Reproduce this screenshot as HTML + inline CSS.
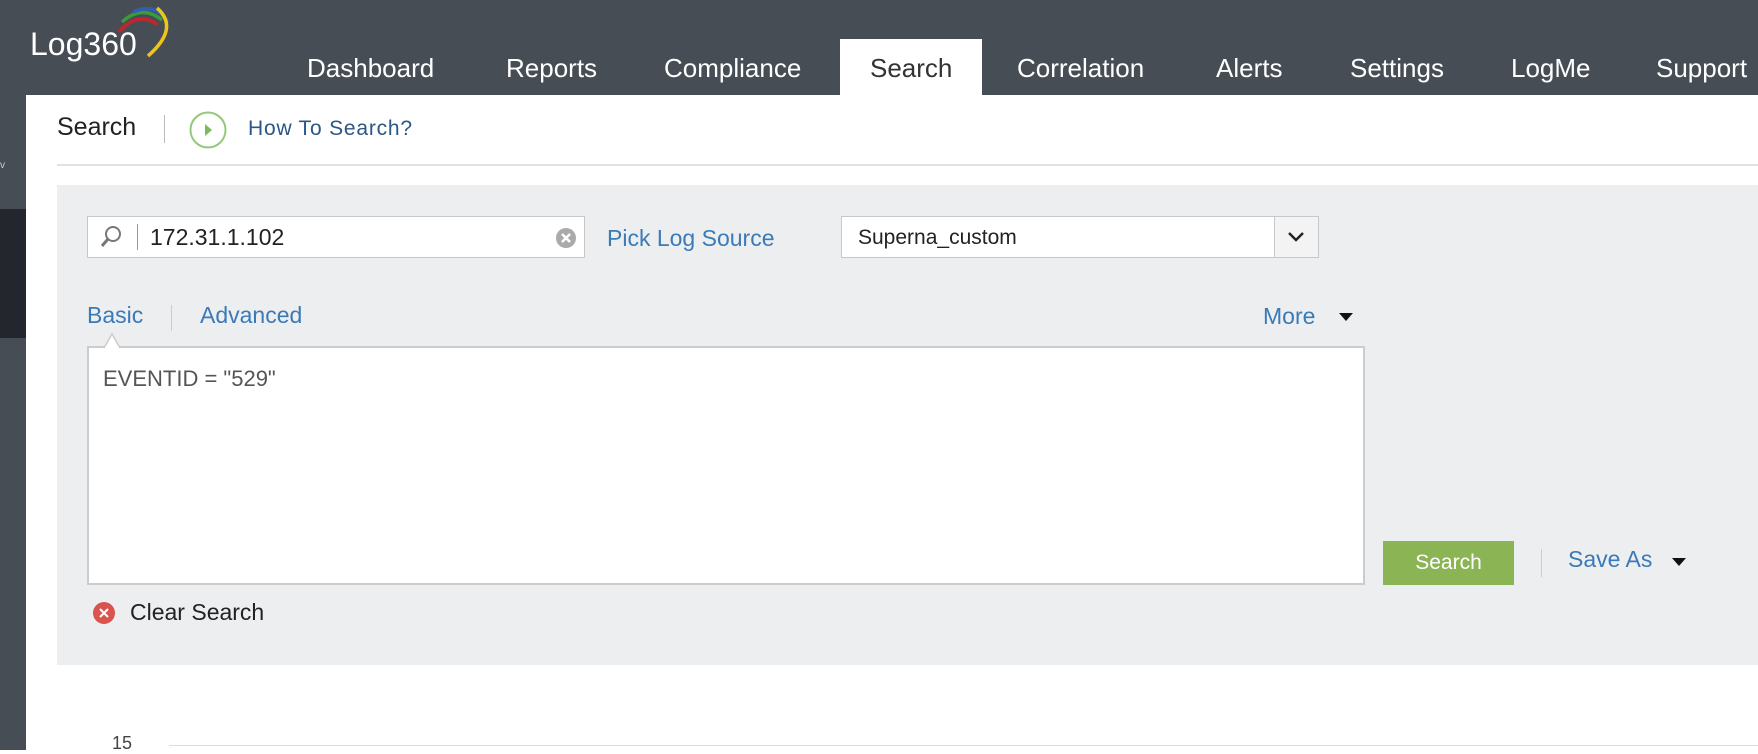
<!DOCTYPE html>
<html><head><meta charset="utf-8"><style>
*{margin:0;padding:0;box-sizing:border-box}
body{width:1758px;height:750px;overflow:hidden;background:#fff;font-family:"Liberation Sans",sans-serif;position:relative}
.a{position:absolute}
.nav{left:0;top:0;width:1758px;height:95px;background:#464d55}
.side{left:0;top:95px;width:26px;height:655px;background:#464d55}
.ni{color:#fff;font-size:26px;top:53px}
.blue{color:#3a7ab7}
</style></head><body>
<div class="a nav"></div>
<div class="a side"></div>
<div class="a" style="left:0;top:209px;width:26px;height:129px;background:#23272d"></div>
<div class="a" style="left:0;top:160px;width:6px;height:10px;color:#ccc;font-size:10px">v</div>
<div class="a" style="left:30px;top:26px;color:#fff;font-size:32px">Log360</div>
<svg class="a" style="left:0;top:0" width="200" height="70" viewBox="0 0 200 70">
<path d="M119 32 Q138 10 158 25" stroke="#c0262d" stroke-width="3.5" fill="none"/>
<path d="M122 22 Q142 4 162 20" stroke="#3b9a3a" stroke-width="3.5" fill="none"/>
<path d="M133 12 Q155 2 168 22" stroke="#2f5fb0" stroke-width="3.5" fill="none"/>
<path d="M157 8 Q180 28 148 56" stroke="#f0c419" stroke-width="3.5" fill="none"/>
</svg>
<div class="a" style="left:840px;top:39px;width:142px;height:56px;background:#fff"></div>
<div class="a ni" style="left:307px">Dashboard</div>
<div class="a ni" style="left:506px">Reports</div>
<div class="a ni" style="left:664px">Compliance</div>
<div class="a ni" style="left:870px;color:#333">Search</div>
<div class="a ni" style="left:1017px">Correlation</div>
<div class="a ni" style="left:1216px">Alerts</div>
<div class="a ni" style="left:1350px">Settings</div>
<div class="a ni" style="left:1511px">LogMe</div>
<div class="a ni" style="left:1656px">Support</div>

<div class="a" style="left:57px;top:113px;font-size:25px;color:#222">Search</div>
<div class="a" style="left:164px;top:115px;width:1px;height:28px;background:#bbb"></div>
<svg class="a" style="left:188px;top:110px" width="40" height="40"><circle cx="20" cy="20" r="17.5" fill="none" stroke="#93c97a" stroke-width="2"/><path d="M17 14 L24 20 L17 26Z" fill="#7cbb5c"/></svg>
<div class="a" style="left:248px;top:117px;font-size:21px;letter-spacing:0.8px;color:#2a5785">How To Search?</div>
<div class="a" style="left:57px;top:164px;width:1701px;height:2px;background:#e2e2e2"></div>

<div class="a" style="left:57px;top:185px;width:1701px;height:480px;background:#edeef0"></div>
<div class="a" style="left:87px;top:216px;width:498px;height:42px;background:#fff;border:1px solid #c8c8c8"></div>
<svg class="a" style="left:98px;top:224px" width="26" height="26"><circle cx="15" cy="10" r="7" fill="none" stroke="#777" stroke-width="2"/><path d="M10 15 L4 22" stroke="#777" stroke-width="3"/></svg>
<div class="a" style="left:137px;top:224px;width:1px;height:26px;background:#999"></div>
<div class="a" style="left:150px;top:224px;font-size:23px;color:#222">172.31.1.102</div>
<svg class="a" style="left:555px;top:227px" width="22" height="22"><circle cx="11" cy="11" r="10" fill="#aaa"/><path d="M7 7 L15 15 M15 7 L7 15" stroke="#fff" stroke-width="2.5"/></svg>
<div class="a blue" style="left:607px;top:225px;font-size:23px">Pick Log Source</div>
<div class="a" style="left:841px;top:216px;width:478px;height:42px;background:#fff;border:1px solid #c8c8c8"></div>
<div class="a" style="left:1274px;top:217px;width:44px;height:40px;background:#f3f3f3;border-left:1px solid #c8c8c8"></div>
<svg class="a" style="left:1285px;top:228px" width="22" height="18"><path d="M4 5 L11 12 L18 5" stroke="#222" stroke-width="2.5" fill="none"/></svg>
<div class="a" style="left:858px;top:226px;font-size:21px;color:#222">Superna_custom</div>

<div class="a blue" style="left:87px;top:302px;font-size:23px">Basic</div>
<div class="a" style="left:171px;top:305px;width:1px;height:26px;background:#ccc"></div>
<div class="a blue" style="left:200px;top:302px;font-size:23px">Advanced</div>
<div class="a blue" style="left:1263px;top:303px;font-size:23px">More</div>
<svg class="a" style="left:1338px;top:312px" width="16" height="10"><path d="M1 1 L15 1 L8 9Z" fill="#111"/></svg>
<div class="a" style="left:87px;top:346px;width:1278px;height:239px;background:#fff;border:2px solid #ccc"></div>
<svg class="a" style="left:104px;top:332px" width="26" height="17"><path d="M0 16 L8 2 L16 16" fill="#fff" stroke="#ccc" stroke-width="1.5"/></svg>
<div class="a" style="left:103px;top:366px;font-size:22px;color:#555">EVENTID = "529"</div>

<div class="a" style="left:1383px;top:541px;width:131px;height:44px;background:#8bb554;color:#fff;font-size:21px;text-align:center;line-height:44px">Search</div>
<div class="a" style="left:1541px;top:549px;width:1px;height:28px;background:#ccc"></div>
<div class="a blue" style="left:1568px;top:546px;font-size:23px">Save As</div>
<svg class="a" style="left:1671px;top:557px" width="16" height="10"><path d="M1 1 L15 1 L8 9Z" fill="#111"/></svg>

<svg class="a" style="left:92px;top:601px" width="24" height="24"><circle cx="12" cy="12" r="11" fill="#d9534f"/><path d="M8 8 L16 16 M16 8 L8 16" stroke="#fff" stroke-width="2"/></svg>
<div class="a" style="left:130px;top:599px;font-size:23px;color:#222">Clear Search</div>

<div class="a" style="left:112px;top:733px;font-size:18px;color:#444">15</div>
<div class="a" style="left:169px;top:745px;width:1589px;height:1px;background:#ddd"></div>
</body></html>
